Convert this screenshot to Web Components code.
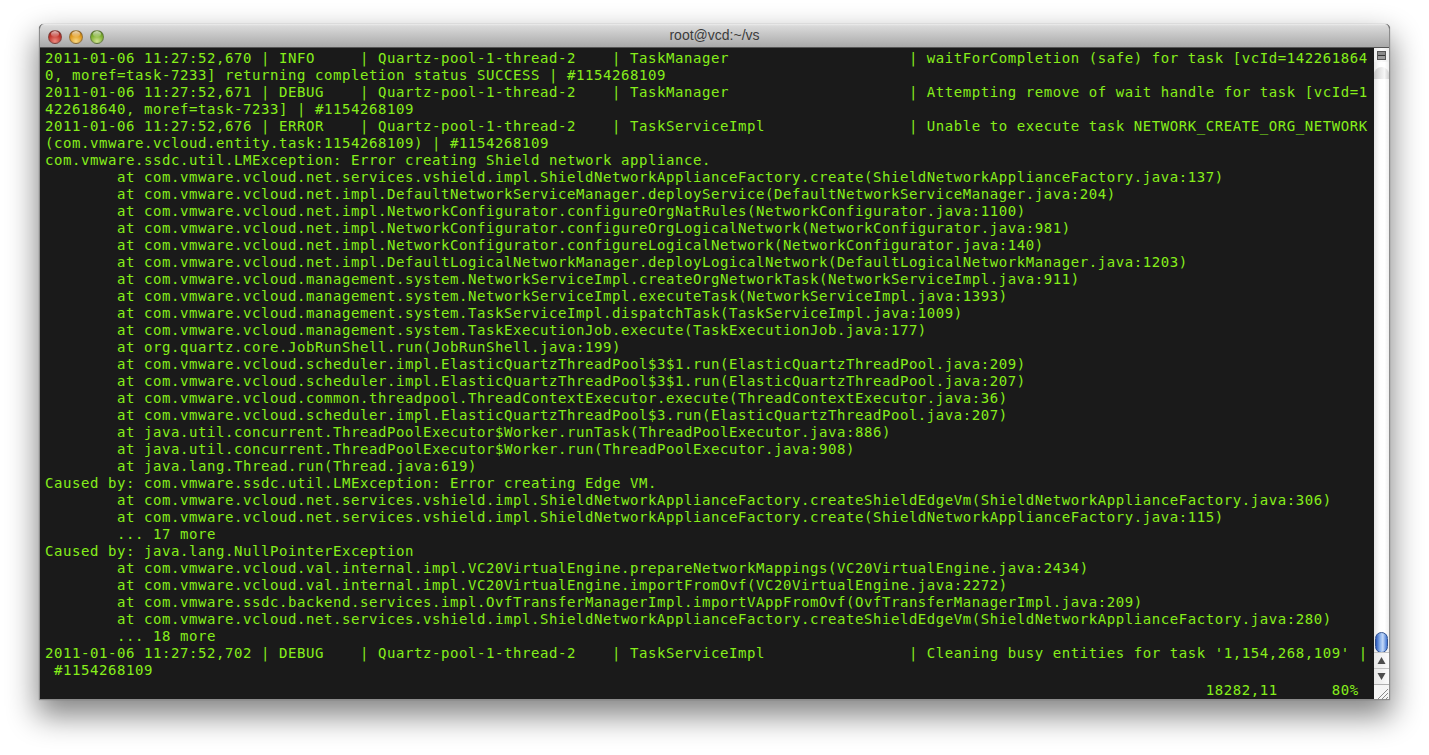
<!DOCTYPE html>
<html><head><meta charset="utf-8"><title>root@vcd:~/vs</title>
<style>html,body{margin:0;padding:0;background:#fff;overflow:hidden;height:755px}</style></head>
<body>
<term-window title="root@vcd:~/vs" ruler-pos="18282,11" percent="80%"><term-log></term-log></term-window>
<script>
const LOG=`2011-01-06 11:27:52,670 | INFO     | Quartz-pool-1-thread-2    | TaskManager                    | waitForCompletion (safe) for task [vcId=142261864
0, moref=task-7233] returning completion status SUCCESS | #1154268109
2011-01-06 11:27:52,671 | DEBUG    | Quartz-pool-1-thread-2    | TaskManager                    | Attempting remove of wait handle for task [vcId=1
422618640, moref=task-7233] | #1154268109
2011-01-06 11:27:52,676 | ERROR    | Quartz-pool-1-thread-2    | TaskServiceImpl                | Unable to execute task NETWORK_CREATE_ORG_NETWORK
(com.vmware.vcloud.entity.task:1154268109) | #1154268109
com.vmware.ssdc.util.LMException: Error creating Shield network appliance.
        at com.vmware.vcloud.net.services.vshield.impl.ShieldNetworkApplianceFactory.create(ShieldNetworkApplianceFactory.java:137)
        at com.vmware.vcloud.net.impl.DefaultNetworkServiceManager.deployService(DefaultNetworkServiceManager.java:204)
        at com.vmware.vcloud.net.impl.NetworkConfigurator.configureOrgNatRules(NetworkConfigurator.java:1100)
        at com.vmware.vcloud.net.impl.NetworkConfigurator.configureOrgLogicalNetwork(NetworkConfigurator.java:981)
        at com.vmware.vcloud.net.impl.NetworkConfigurator.configureLogicalNetwork(NetworkConfigurator.java:140)
        at com.vmware.vcloud.net.impl.DefaultLogicalNetworkManager.deployLogicalNetwork(DefaultLogicalNetworkManager.java:1203)
        at com.vmware.vcloud.management.system.NetworkServiceImpl.createOrgNetworkTask(NetworkServiceImpl.java:911)
        at com.vmware.vcloud.management.system.NetworkServiceImpl.executeTask(NetworkServiceImpl.java:1393)
        at com.vmware.vcloud.management.system.TaskServiceImpl.dispatchTask(TaskServiceImpl.java:1009)
        at com.vmware.vcloud.management.system.TaskExecutionJob.execute(TaskExecutionJob.java:177)
        at org.quartz.core.JobRunShell.run(JobRunShell.java:199)
        at com.vmware.vcloud.scheduler.impl.ElasticQuartzThreadPool$3$1.run(ElasticQuartzThreadPool.java:209)
        at com.vmware.vcloud.scheduler.impl.ElasticQuartzThreadPool$3$1.run(ElasticQuartzThreadPool.java:207)
        at com.vmware.vcloud.common.threadpool.ThreadContextExecutor.execute(ThreadContextExecutor.java:36)
        at com.vmware.vcloud.scheduler.impl.ElasticQuartzThreadPool$3.run(ElasticQuartzThreadPool.java:207)
        at java.util.concurrent.ThreadPoolExecutor$Worker.runTask(ThreadPoolExecutor.java:886)
        at java.util.concurrent.ThreadPoolExecutor$Worker.run(ThreadPoolExecutor.java:908)
        at java.lang.Thread.run(Thread.java:619)
Caused by: com.vmware.ssdc.util.LMException: Error creating Edge VM.
        at com.vmware.vcloud.net.services.vshield.impl.ShieldNetworkApplianceFactory.createShieldEdgeVm(ShieldNetworkApplianceFactory.java:306)
        at com.vmware.vcloud.net.services.vshield.impl.ShieldNetworkApplianceFactory.create(ShieldNetworkApplianceFactory.java:115)
        ... 17 more
Caused by: java.lang.NullPointerException
        at com.vmware.vcloud.val.internal.impl.VC20VirtualEngine.prepareNetworkMappings(VC20VirtualEngine.java:2434)
        at com.vmware.vcloud.val.internal.impl.VC20VirtualEngine.importFromOvf(VC20VirtualEngine.java:2272)
        at com.vmware.ssdc.backend.services.impl.OvfTransferManagerImpl.importVAppFromOvf(OvfTransferManagerImpl.java:209)
        at com.vmware.vcloud.net.services.vshield.impl.ShieldNetworkApplianceFactory.createShieldEdgeVm(ShieldNetworkApplianceFactory.java:280)
        ... 18 more
2011-01-06 11:27:52,702 | DEBUG    | Quartz-pool-1-thread-2    | TaskServiceImpl                | Cleaning busy entities for task '1,154,268,109' |
 #1154268109`;

class TrafficLight extends HTMLElement{
  constructor(){super();const c=this.getAttribute('color');const p={red:['#ec8a80','#c0352c','#8c1a14'],amber:['#f8d884','#e09a1e','#a8690e'],green:['#cfe391','#7fb032','#55801a']}[c];
    this.attachShadow({mode:'open'}).innerHTML=`<style>:host{display:block;width:14px;height:14px;border-radius:50%;box-sizing:border-box;
      border:1px solid rgba(80,80,80,.5);
      background:radial-gradient(circle at 50% 85%,${p[0]} 0,${p[1]} 55%,${p[2]} 100%);position:relative;overflow:hidden}
      i{position:absolute;left:2px;right:2px;top:0;height:6px;border-radius:50%;background:linear-gradient(rgba(255,255,255,.7),rgba(255,255,255,.08))}</style><i></i>`;}
}
customElements.define('traffic-light',TrafficLight);

class TermScrollbar extends HTMLElement{
  constructor(){super();this.attachShadow({mode:'open'}).innerHTML=`<style>
    :host{display:flex;flex-direction:column;width:15px;flex:none;background:#fff}
    .split{height:14px;flex:none;display:flex;align-items:center;justify-content:center;background:linear-gradient(90deg,#ececec,#fafafa 50%,#ececec)}
    .split i{display:block;width:9px;height:9px;box-sizing:border-box;border:1px solid #555;background:linear-gradient(#8a8a8a 0 3px,#333 3px 4px,#9a9a9a 4px)}
    .track{flex:1;position:relative;background:linear-gradient(90deg,#e4e4e4,#fdfdfd 35%,#fff 70%,#eeeeee);overflow:hidden}
    .cap{height:12px;border-radius:8px 8px 0 0;margin-top:5px;background:linear-gradient(90deg,#c4c4c4,#e8e8e8 45%,#f6f6f6 70%,#d0d0d0)}
    .thumb{position:absolute;left:1px;width:13px;top:570px;height:21px;border-radius:7px;border:1px solid #32528f;box-sizing:border-box;
      background:linear-gradient(90deg,#2a58bc,#86aeea 35%,#c4d9f8 62%,#3f74d2)}
    .btn{height:16px;box-sizing:border-box;flex:none;display:flex;align-items:center;justify-content:center;background:linear-gradient(90deg,#e8e8e8,#fbfbfb);border-top:1px solid #c4c4c4}
    .grip{height:15px;box-sizing:border-box;flex:none;background:#f5f5f5;border-top:1px solid #b0b0b0}
    svg{display:block}
    </style>
    <div class="split"><i></i></div>
    <div class="track"><div class="cap"></div><div class="thumb"></div></div>
    <div class="btn"><svg width="9" height="7"><path d="M4.5 0 L8.5 7 H.5Z" fill="#4d4d4d"/></svg></div>
    <div class="btn"><svg width="9" height="7"><path d="M.5 0 H8.5 L4.5 7Z" fill="#4d4d4d"/></svg></div>
    <div class="grip"><svg width="15" height="14"><path d="M4 14 L14 4 M8 14 L14 8 M12 14 L14 12" stroke="#8a8a8a" fill="none"/></svg></div>`;}
}
customElements.define('term-scrollbar',TermScrollbar);

class TermLog extends HTMLElement{
  constructor(){super();this.attachShadow({mode:'open'}).innerHTML=`<style>
    :host{display:block;flex:1;min-width:0;padding:2px 0 0 5px;overflow:hidden}
    .l{display:block;height:17px;line-height:17px;white-space:pre}
    </style><div id="o"></div>`;
    const o=this.shadowRoot.getElementById('o');
    for(const t of LOG.split('\n')){const d=document.createElement('div');d.className='l';d.textContent=t;o.append(d);}
  }
}
customElements.define('term-log',TermLog);

class TermWindow extends HTMLElement{
  constructor(){super();const r=this.attachShadow({mode:'open'});
    r.innerHTML=`<style>
    :host{display:block;box-sizing:border-box;width:1351px;height:676px;margin:24px 0 0 39px;border-radius:5px 5px 0 0;
      box-shadow:0 0 1px rgba(0,0,0,.5),0 14px 30px 2px rgba(0,0,0,.48);background:#1a1a1a}
    .frame{display:flex;flex-direction:column;height:100%;border:1px solid #8c8c8c;border-top:0;box-sizing:border-box;border-radius:5px 5px 0 0;overflow:hidden}
    .bar{height:24px;flex:none;display:flex;align-items:center;gap:7px;padding:2px 0 0 8px;position:relative;box-sizing:border-box;
      background:linear-gradient(#ededed,#dadada 8%,#a9a9a9);border-bottom:1px solid #555;}
    .title{position:absolute;left:0;right:0;top:1px;text-align:center;font:14px/21px "Liberation Sans",Arial,sans-serif;color:#3c3c3c}
    .main{flex:1;display:flex;min-height:0;background:#1a1a1a;color:#86ee1a;font:14px "DejaVu Sans Mono",monospace;letter-spacing:.57px}
    .content{flex:1;min-width:0;display:flex;flex-direction:column}
    .ruler{white-space:pre;height:17px;line-height:17px;padding-left:5px;flex:none}
    </style>
    <div class="frame">
      <div class="bar"><traffic-light color="red"></traffic-light><traffic-light color="amber"></traffic-light><traffic-light color="green"></traffic-light><div class="title"></div></div>
      <div class="main"><div class="content"><slot></slot><div class="ruler"></div></div><term-scrollbar></term-scrollbar></div>
    </div>`;
    r.querySelector('.title').textContent=this.getAttribute('title');
    r.querySelector('.ruler').textContent=' '.repeat(129)+this.getAttribute('ruler-pos').padEnd(14,' ')+this.getAttribute('percent');
  }
}
customElements.define('term-window',TermWindow);
</script>
</body></html>
